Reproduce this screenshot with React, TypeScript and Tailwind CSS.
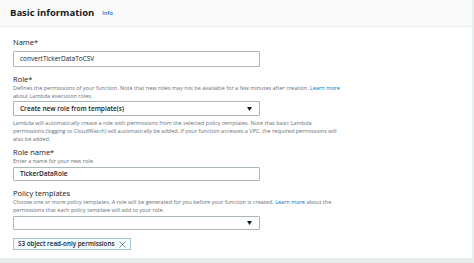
import { X } from "lucide-react";

function Caret() {
  return (
    <svg width="5" height="4" viewBox="0 0 5 4" className="shrink-0">
      <path d="M0 0h5L2.5 4z" fill="#16191f" />
    </svg>
  );
}

function Label({ children, className = "" }: { children: React.ReactNode; className?: string }) {
  return <div className={`text-[7.5px] leading-[9px] text-[#16191f] ${className}`}>{children}</div>;
}

function Hint({ children, className = "" }: { children: React.ReactNode; className?: string }) {
  return (
    <div className={`text-[5.5px] leading-[8px] text-[#687078] whitespace-nowrap ${className}`}>{children}</div>
  );
}

function Link({ children }: { children: React.ReactNode }) {
  return <span className="text-[#0073bb]">{children}</span>;
}

export default function App() {
  return (
    <div
      className="w-[474px] h-[263px] bg-[#eaeded] flex flex-col overflow-hidden"
      style={{ fontFamily: '"Open Sans", "Noto Sans", Arial, sans-serif' }}
    >
      <div className="w-[473px] h-[258px] bg-white border-r border-[#eaeded] flex flex-col">
        <div className="h-[27px] bg-[#fafafa] border-b border-[#eaeded] flex items-center gap-[8px] px-[10px]">
          <span className="text-[9.5px] font-bold text-[#16191f]">Basic information</span>
          <span className="text-[5.5px] font-semibold text-[#0073bb]">Info</span>
        </div>

        <div className="flex flex-col px-[13px]">
          <Label className="mt-[11px]">Name*</Label>
          <div className="mt-[4px] w-[247px] h-[16px] border border-[#aab7b8] rounded-[1px] flex items-center px-[6px] text-[6.5px] font-medium text-[#16191f]">
            convertTickerDataToCSV
          </div>

          <Label className="mt-[8px]">Role*</Label>
          <Hint>
            Defines the permissions of your function. Note that new roles may not be available for a few minutes after creation. <Link>Learn more</Link>
            <br />
            about Lambda execution roles.
          </Hint>
          <div className="mt-[1px] w-[247px] h-[15px] border border-[#aab7b8] rounded-[1px] flex items-center justify-between pl-[6px] pr-[7px] text-[6.5px] font-semibold text-[#16191f]">
            <span>Create new role from template(s)</span>
            <Caret />
          </div>
          <Hint className="mt-[3px]">
            Lambda will automatically create a role with permissions from the selected policy templates. Note that basic Lambda
            <br />
            permissions (logging to CloudWatch) will automatically be added. If your function accesses a VPC, the required permissions will
            <br />
            also be added.
          </Hint>

          <Label className="mt-[5px]">Role name*</Label>
          <Hint>Enter a name for your new role.</Hint>
          <div className="mt-[2px] w-[247px] h-[14px] border border-[#aab7b8] rounded-[1px] flex items-center px-[6px] text-[6.5px] font-semibold text-[#16191f]">
            TickerDataRole
          </div>

          <Label className="mt-[8px]">Policy templates</Label>
          <Hint>
            Choose one or more policy templates. A role will be generated for you before your function is created. <Link>Learn more</Link> about the
            <br />
            permissions that each policy template will add to your role.
          </Hint>
          <div className="mt-[2px] w-[247px] h-[14px] border border-[#aab7b8] rounded-[1px] flex items-center justify-end pr-[7px]">
            <Caret />
          </div>

          <div className="mt-[8px] self-start h-[12px] bg-[#f1faff] border border-[#a9c6d4] flex items-center gap-[3px] pl-[4px] pr-[2px] text-[6.3px] font-semibold text-[#16191f]">
            <span>S3 object read-only permissions</span>
            <X size={11} strokeWidth={1.3} color="#414750" />
          </div>
        </div>
      </div>
    </div>
  );
}
